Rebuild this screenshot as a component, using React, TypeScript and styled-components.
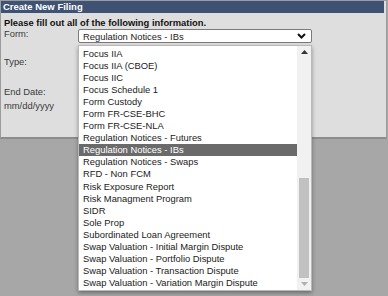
import type { FC } from "react";
import { createGlobalStyle, styled } from "styled-components";

const forms = [
  "Focus IIA",
  "Focus IIA (CBOE)",
  "Focus IIC",
  "Focus Schedule 1",
  "Form Custody",
  "Form FR-CSE-BHC",
  "Form FR-CSE-NLA",
  "Regulation Notices - Futures",
  "Regulation Notices - IBs",
  "Regulation Notices - Swaps",
  "RFD - Non FCM",
  "Risk Exposure Report",
  "Risk Managment Program",
  "SIDR",
  "Sole Prop",
  "Subordinated Loan Agreement",
  "Swap Valuation - Initial Margin Dispute",
  "Swap Valuation - Portfolio Dispute",
  "Swap Valuation - Transaction Dispute",
  "Swap Valuation - Variation Margin Dispute",
];

const selected = "Regulation Notices - IBs";

const GlobalStyle = createGlobalStyle`
  html, body {
    margin: 0;
    padding: 0;
    background: #a7a7a7;
    font-family: "Liberation Sans", Arial, sans-serif;
    font-size: 9.4px;
  }
`;

const App: FC = () => {
  return (
    <>
      <GlobalStyle />
      <Page>
        <Panel>
          <Header>Create New Filing</Header>
          <Intro>Please fill out all of the following information.</Intro>
          <FieldRow $height={14}>
            <Label $offset={-1.5}>Form:</Label>
            <SelectWrap>
              <SelectBox>
                <span>{selected}</span>
                <svg width="9" height="6" viewBox="0 0 9 6">
                  <path d="M1 1 L4.5 4.5 L8 1" fill="none" stroke="#111" strokeWidth="2" />
                </svg>
              </SelectBox>
              <OptionList>
                <Options>
                  {forms.map((f) => (
                    <Option key={f} $active={f === selected}>
                      {f}
                    </Option>
                  ))}
                </Options>
                <Scrollbar>
                  <Arrow $dim={false}>
                    <svg width="7" height="4" viewBox="0 0 7 4">
                      <path d="M0 4 L3.5 0 L7 4 Z" fill="#333" />
                    </svg>
                  </Arrow>
                  <Track>
                    <Thumb />
                  </Track>
                  <Arrow $dim>
                    <svg width="7" height="4" viewBox="0 0 7 4">
                      <path d="M0 0 L3.5 4 L7 0 Z" fill="#b0b0b0" />
                    </svg>
                  </Arrow>
                </Scrollbar>
              </OptionList>
            </SelectWrap>
          </FieldRow>
          <FieldRow $height={12} $gap={13}>
            <Label>Type:</Label>
          </FieldRow>
          <FieldRow $height={12} $gap={18}>
            <Label>End Date:</Label>
          </FieldRow>
          <Hint>mm/dd/yyyy</Hint>
        </Panel>
      </Page>
    </>
  );
};

export default App;

const Page = styled.div`
  width: 388px;
  height: 296px;
  background: #a7a7a7;
  overflow: hidden;
`;

const Panel = styled.div`
  box-sizing: border-box;
  width: 387px;
  height: 139px;
  background: #dedede;
  border: 1px solid #9c9c9c;
  border-bottom: 2px solid #8c8c8c;
  padding: 0 2px 0 0;
`;

const Header = styled.div`
  height: 12px;
  line-height: 12px;
  background: #3e5273;
  color: #fff;
  font-weight: 700;
  font-size: 9.5px;
  padding-left: 2px;
`;

const Intro = styled.div`
  margin-top: 4px;
  padding-left: 3px;
  height: 12px;
  line-height: 12px;
  font-weight: 700;
  color: #111;
`;

const FieldRow = styled.div<{ $height: number; $gap?: number }>`
  display: grid;
  grid-template-columns: 77px 234px;
  height: ${({ $height }) => $height}px;
  margin-top: ${({ $gap }) => $gap ?? 0}px;
`;

const Label = styled.div<{ $offset?: number }>`
  padding-left: 3px;
  line-height: 12px;
  color: #3a3a3a;
  margin-top: ${({ $offset }) => $offset ?? 0}px;
`;

const Hint = styled.div`
  padding-left: 3px;
  margin-top: 1.5px;
  line-height: 12px;
  color: #3a3a3a;
`;

const SelectWrap = styled.div`
  position: relative;
`;

const SelectBox = styled.div`
  box-sizing: border-box;
  height: 14px;
  display: flex;
  align-items: center;
  justify-content: space-between;
  padding: 0 5px 0 4px;
  background: #fff;
  border: 1px solid #7a7a7a;
  border-radius: 2px;
  color: #1c1c1c;
`;

const OptionList = styled.div`
  position: absolute;
  top: 16px;
  left: 0;
  z-index: 2;
  box-sizing: border-box;
  width: 234px;
  height: 246px;
  display: flex;
  background: #fff;
  border: 1px solid #b9b9b9;
  box-shadow: 0 2px 4px rgba(0, 0, 0, 0.35);
`;

const Options = styled.div`
  flex: 1;
  padding-top: 1.5px;
`;

const Option = styled.div<{ $active: boolean }>`
  height: 12.1px;
  line-height: 12.1px;
  padding-left: 4px;
  white-space: nowrap;
  color: ${({ $active }) => ($active ? "#fff" : "#1a1a1a")};
  background: ${({ $active }) => ($active ? "#6a6a6a" : "transparent")};
`;

const Scrollbar = styled.div`
  width: 14px;
  display: flex;
  flex-direction: column;
  background: #f1f1f1;
`;

const Arrow = styled.div<{ $dim: boolean }>`
  height: 12px;
  display: flex;
  align-items: center;
  justify-content: center;
`;

const Track = styled.div`
  flex: 1;
  display: flex;
  flex-direction: column;
  justify-content: flex-end;
  padding: 0 2px;
`;

const Thumb = styled.div`
  height: 100px;
  background: #c1c1c1;
`;
